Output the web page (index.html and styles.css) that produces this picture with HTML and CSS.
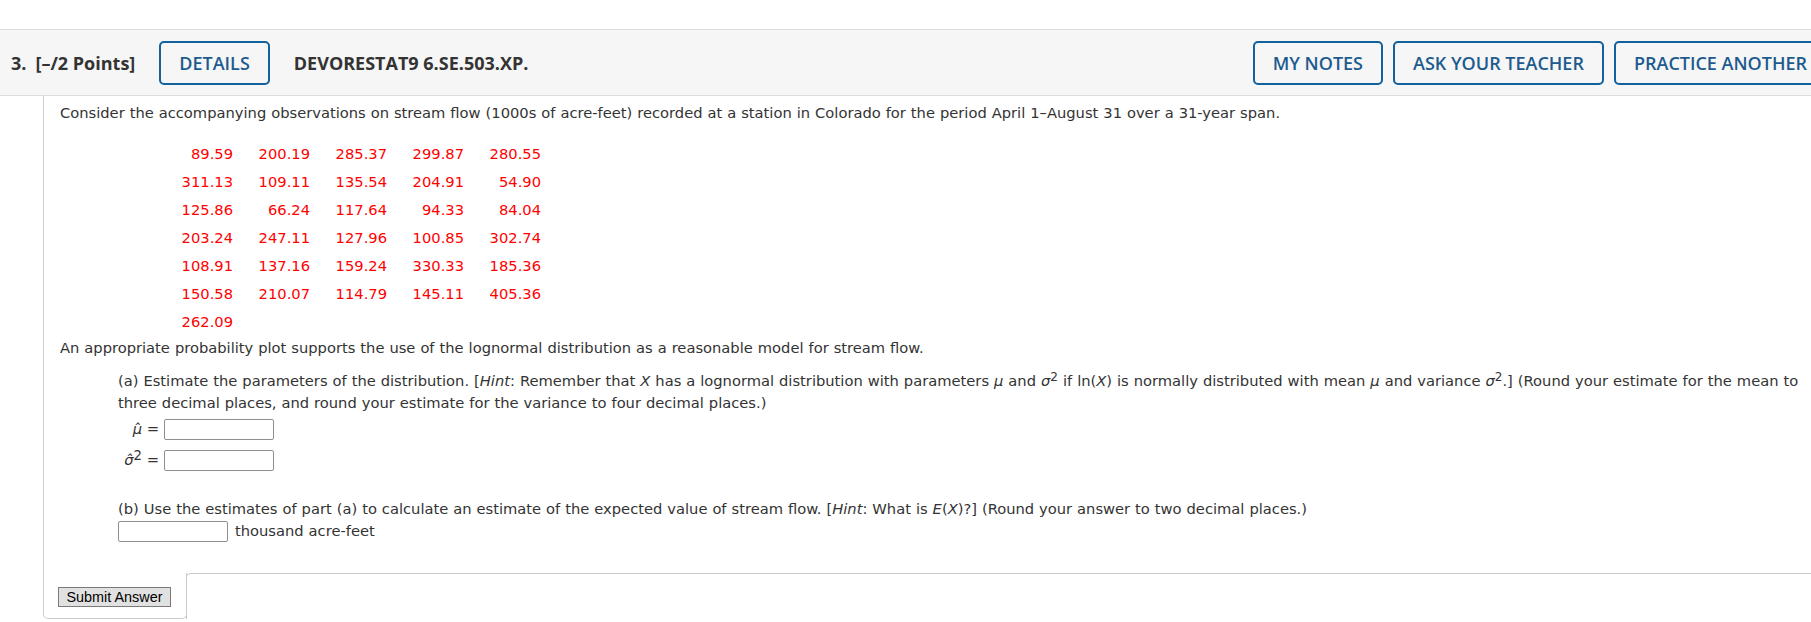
FILE: index.html
```html
<!DOCTYPE html>
<html lang="en">
<head>
<meta charset="utf-8">
<title>Question 3</title>
<link rel="stylesheet" href="styles.css">
</head>
<body>
<div class="page">
  <header class="qhead">
    <span class="qnum">3.</span>
    <span class="qpts">[–/2 Points]</span>
    <button class="hbtn">DETAILS</button>
    <span class="qid">DEVORESTAT9 6.SE.503.XP.</span>
    <div class="hright">
      <button class="hbtn">MY NOTES</button>
      <button class="hbtn">ASK YOUR TEACHER</button>
      <button class="hbtn">PRACTICE ANOTHER</button>
    </div>
  </header>
  <div class="qbody">
    <section class="qcontent">
      <p>Consider the accompanying observations on stream flow (1000s of acre-feet) recorded at a station in Colorado for the period April 1–August 31 over a 31-year span.</p>
      <div class="data">
        <span>89.59</span><span>200.19</span><span>285.37</span><span>299.87</span><span>280.55</span>
        <span>311.13</span><span>109.11</span><span>135.54</span><span>204.91</span><span>54.90</span>
        <span>125.86</span><span>66.24</span><span>117.64</span><span>94.33</span><span>84.04</span>
        <span>203.24</span><span>247.11</span><span>127.96</span><span>100.85</span><span>302.74</span>
        <span>108.91</span><span>137.16</span><span>159.24</span><span>330.33</span><span>185.36</span>
        <span>150.58</span><span>210.07</span><span>114.79</span><span>145.11</span><span>405.36</span>
        <span>262.09</span>
      </div>
      <p class="p-an">An appropriate probability plot supports the use of the lognormal distribution as a reasonable model for stream flow.</p>
      <div class="part">
        <p class="part-a">(a) Estimate the parameters of the distribution. [<i>Hint</i>: Remember that <i>X</i> has a lognormal distribution with parameters <i>μ</i> and <i>σ</i><sup>2</sup> if ln(<i>X</i>) is normally distributed with mean <i>μ</i> and variance <i>σ</i><sup>2</sup>.] (Round your estimate for the mean to<br>three decimal places, and round your estimate for the variance to four decimal places.)</p>
        <div class="ans-grid">
          <span class="lbl"><i>μ̂</i></span><span class="eq">=</span><input class="ans" type="text">
          <span class="lbl"><i>σ̂</i><sup class="lsup">2</sup></span><span class="eq">=</span><input class="ans" type="text">
        </div>
        <p class="part-b">(b) Use the estimates of part (a) to calculate an estimate of the expected value of stream flow. [<i>Hint</i>: What is <i>E</i>(<i>X</i>)?] (Round your answer to two decimal places.)</p>
        <div class="ans-row">
          <input class="ans" type="text"><span class="unit">thousand acre-feet</span>
        </div>
      </div>
    </section>
    <div class="qfoot">
      <div class="tab"><button class="submit">Submit Answer</button></div>
      <div class="rest"></div>
    </div>
  </div>
</div>
</body>
</html>
```

FILE: styles.css
```css
html, body {
  margin: 0;
  padding: 0;
  background: #fff;
  overflow: hidden;
}
body {
  font-family: "DejaVu Sans", Verdana, sans-serif;
  font-size: 14.7px;
  color: #333;
}
.page {
  width: 1838px;
  padding-top: 29px;
}
.qhead {
  display: flex;
  align-items: center;
  height: 65px;
  border-top: 1px solid #ddd;
  border-bottom: 1px solid #ddd;
  background: #f6f6f6;
  padding: 0 11px;
  font-family: "Open Sans", sans-serif;
  color: #333;
}
.qnum, .qpts, .qid {
  font-weight: 700;
  font-size: 18px;
}
.qnum { margin-right: 9px; }
.qpts { margin-right: 24px; }
.qid { margin-left: 24px; }
.hbtn {
  font-family: "Open Sans", sans-serif;
  font-weight: 600;
  font-size: 18px;
  color: #1d5b8f;
  background: transparent;
  border: 2px solid #12609c;
  border-radius: 5px;
  height: 44px;
  padding: 0 18px;
  margin: 0;
}
.hright {
  margin-left: auto;
  display: flex;
  gap: 10px;
}
.qbody {
  margin-left: 43px;
}
.qcontent {
  border-left: 1px solid #ccc;
  padding: 6px 16px 31px 16px;
  line-height: 22px;
  word-spacing: 0.3px;
}
p { margin: 0; }
.data {
  display: grid;
  grid-template-columns: repeat(5, 77px);
  grid-auto-rows: 28px;
  line-height: 28px;
  margin: 16px 0 0 96px;
  color: #f00;
  text-align: right;
}
.p-an { margin-top: 1px; }
.part { margin-left: 58px; }
.part-a { margin-top: 11px; }
sup {
  font-size: 0.82em;
  line-height: 0;
  vertical-align: 0.45em;
}
.ans-grid {
  display: grid;
  grid-template-columns: 24px 22px 110px;
  grid-auto-rows: 22px;
  row-gap: 9px;
  align-items: center;
  margin-top: 4px;
}
.lbl { text-align: right; }
.lsup { font-size: 0.9em; vertical-align: 0.35em; }
.eq { text-align: center; }
.ans {
  box-sizing: border-box;
  width: 110px;
  height: 21px;
  border: 1px solid #8f8f8f;
  border-radius: 2px;
  margin: 0;
  padding: 0 3px;
  background: #fff;
}
.part-b { margin-top: 27px; }
.ans-row {
  display: flex;
  align-items: center;
  height: 22px;
}
.unit { margin-left: 7px; }
.qfoot {
  display: flex;
}
.tab {
  box-sizing: border-box;
  width: 144px;
  height: 46px;
  border-left: 1px solid #ccc;
  border-right: 1px solid #ccc;
  border-bottom: 1px solid #ccc;
  border-radius: 0 0 5px 5px;
  padding: 14px 0 0 14px;
}
.rest {
  flex: 1;
  margin-left: -1px;
  border-top: 1px solid #ccc;
  border-left: 1px solid #ccc;
  border-top-left-radius: 5px;
}
.submit {
  box-sizing: border-box;
  width: 113px;
  height: 20px;
  padding: 0;
  margin: 0;
  font-family: "Liberation Sans", Arial, sans-serif;
  font-size: 14.4px;
  line-height: 18px;
  color: #000;
  background: #e1e1e1;
  border: 1px solid #7a7a7a;
  border-radius: 0;
}
```
